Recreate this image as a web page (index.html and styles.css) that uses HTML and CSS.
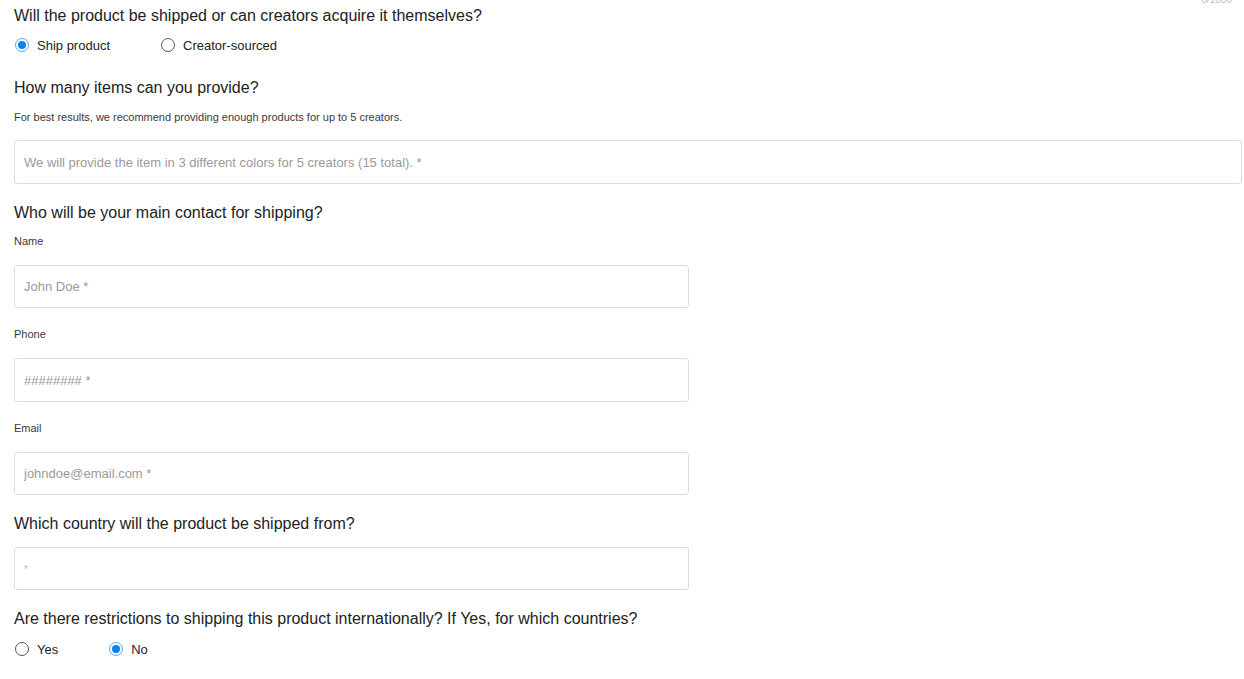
FILE: index.html
```html
<!DOCTYPE html>
<html lang="en">
<head>
    <meta charset="UTF-8">
    <meta name="viewport" content="width=device-width, initial-scale=1.0">
    <title>Shipping Details</title>
    <link rel="stylesheet" href="styles.css">
</head>
<body>
    <div class="counter">0/1000</div>
    <form class="form">
        <div class="question first">Will the product be shipped or can creators acquire it themselves?</div>
        <div class="radio-row">
            <label class="option"><span class="radio checked"></span>Ship product</label>
            <label class="option"><span class="radio"></span>Creator-sourced</label>
        </div>

        <div class="question">How many items can you provide?</div>
        <div class="hint">For best results, we recommend providing enough products for up to 5 creators.</div>
        <input type="text" class="field wide" placeholder="We will provide the item in 3 different colors for 5 creators (15 total). *">

        <div class="question">Who will be your main contact for shipping?</div>
        <div class="label">Name</div>
        <input type="text" class="field" placeholder="John Doe *">
        <div class="label">Phone</div>
        <input type="text" class="field tall" placeholder="######## *">
        <div class="label">Email</div>
        <input type="text" class="field" placeholder="johndoe@email.com *">

        <div class="question">Which country will the product be shipped from?</div>
        <input type="text" class="field country" placeholder="*">

        <div class="question">Are there restrictions to shipping this product internationally? If Yes, for which countries?</div>
        <div class="radio-row">
            <label class="option"><span class="radio"></span>Yes</label>
            <label class="option"><span class="radio checked"></span>No</label>
        </div>
    </form>
</body>
</html>
```

FILE: styles.css
```css
body {
    margin: 0;
    font-family: "Liberation Sans", Arial, sans-serif;
    background: #fff;
    color: #222;
}
.counter {
    height: 3px;
    overflow: hidden;
    text-align: right;
    padding-right: 12px;
    font-size: 10px;
    line-height: 0;
    color: #bbb;
}
.form {
    padding: 3px 0 0 14px;
    display: flex;
    flex-direction: column;
    align-items: flex-start;
}
.question {
    font-size: 16px;
    line-height: 20px;
    color: #222;
    margin-top: 19px;
    margin-bottom: 13px;
}
.question.first {
    margin-top: 0;
    margin-bottom: 9px;
}
.question + .radio-row {
    margin-top: -3px;
}
.question.first + .radio-row {
    margin-top: 0;
}
.radio-row {
    display: flex;
    height: 20px;
    align-items: center;
    padding-left: 1px;
}
.radio-row + .question {
    margin-top: 23px;
}
.option {
    display: flex;
    align-items: center;
    font-size: 13px;
    color: #222;
    margin-right: 51px;
}
.radio {
    width: 12px;
    height: 12px;
    border: 1px solid #555;
    border-radius: 50%;
    margin-right: 8px;
    display: flex;
    align-items: center;
    justify-content: center;
    background: #fff;
}
.radio.checked {
    border-color: #5aa9f0;
}
.radio.checked::after {
    content: "";
    width: 8px;
    height: 8px;
    border-radius: 50%;
    background: #0a84f0;
}
.hint {
    font-size: 11px;
    line-height: 14px;
    color: #3a3a3a;
    margin-top: -1px;
    margin-bottom: 16px;
}
.label {
    font-size: 11px;
    line-height: 14px;
    color: #3a3a3a;
    margin-top: 19px;
    margin-bottom: 17px;
}
.question + .label {
    margin-top: -2px;
}
.field {
    box-sizing: border-box;
    width: 675px;
    height: 43px;
    margin: 0;
    padding: 0 9px;
    border: 1px solid #ddd;
    border-radius: 3px;
    font-family: "Liberation Sans", Arial, sans-serif;
    font-size: 13px;
    color: #222;
    outline: none;
}
.field.tall {
    height: 44px;
}
.field.wide {
    width: 1228px;
    height: 44px;
}
.field::placeholder {
    color: #9a9a9a;
}
.field.country::placeholder {
    font-size: 10px;
    color: #bbb;
}
```
